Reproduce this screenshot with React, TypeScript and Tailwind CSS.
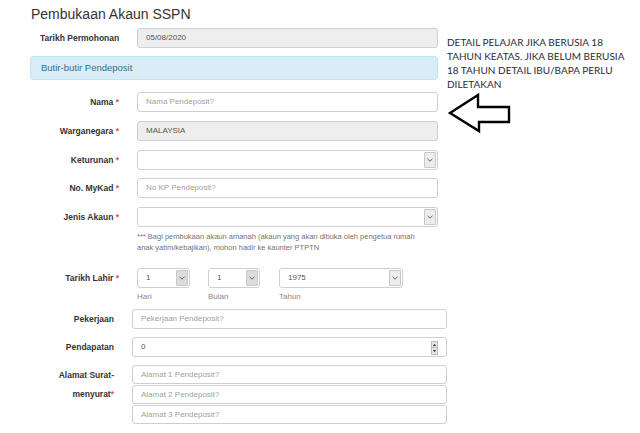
const sans = "font-['Liberation_Sans',Arial,sans-serif]"

function Caret({ dark }: { dark?: boolean }) {
    return (
        <span
            className={`absolute right-[1px] top-[1px] bottom-[1px] w-[12px] flex items-center justify-center border border-[#c8c8c8] rounded-[1px] ${dark ? 'bg-[#dcdcdc]' : 'bg-[#ececec]'}`}
        >
            <svg width="6" height="4" viewBox="0 0 6 4">
                <path d="M0.5 0.8 L3 3.2 L5.5 0.8" fill="none" stroke="#555" strokeWidth="0.9" />
            </svg>
        </span>
    )
}

function Box({
    value,
    placeholder,
    disabled,
    select,
    dark,
    spinner,
    className = '',
}: {
    value?: string
    placeholder?: string
    disabled?: boolean
    select?: boolean
    dark?: boolean
    spinner?: boolean
    className?: string
}) {
    return (
        <div
            className={`relative h-[20px] flex items-center border border-[#cfcfcf] rounded-[3px] px-[8px] text-[8px] ${disabled ? 'bg-[#eeeeee]' : 'bg-white'} ${className}`}
        >
            {value ? (
                <span className="text-[#555]">{value}</span>
            ) : (
                <span className="text-[#a0a0a0]">{placeholder}</span>
            )}
            {select && <Caret dark={dark} />}
            {spinner && (
                <span className="absolute right-[8px] top-[3px] flex flex-col">
                    <span className="w-[7px] h-[7px] bg-[#e4e4e4] border border-[#bbb] flex items-center justify-center">
                        <svg width="3" height="2" viewBox="0 0 3 2"><path d="M0 2 L1.5 0 L3 2 Z" fill="#222" /></svg>
                    </span>
                    <span className="w-[7px] h-[7px] bg-[#e4e4e4] border border-[#bbb] border-t-0 flex items-center justify-center">
                        <svg width="3" height="2" viewBox="0 0 3 2"><path d="M0 0 L1.5 2 L3 0 Z" fill="#222" /></svg>
                    </span>
                </span>
            )}
        </div>
    )
}

function Label({ text, required, wide = true }: { text: string; required?: boolean; wide?: boolean }) {
    return (
        <div className={`${wide ? 'w-[107px]' : 'w-[102px]'} shrink-0 pr-[18px] text-right text-[8.5px] font-bold text-[#333]`}>
            {text}
            {required && <span className="text-[#d9534f]"> *</span>}
        </div>
    )
}

export default function App() {
    return (
        <div className={`w-[640px] h-[433px] overflow-hidden bg-white flex ${sans} text-[#333]`}>
            {/* form */}
            <div className="w-[447px] shrink-0 pl-[30px] pt-[4px] flex flex-col">
                <h1 className="text-[14px] leading-[20px] font-normal text-[#333] pl-[1px]">Pembukaan Akaun SSPN</h1>

                <div className="mt-[4px] flex items-center">
                    <div className="w-[107px] shrink-0 pl-[10px] text-[8.5px] font-bold">Tarikh Permohonan</div>
                    <Box value="05/08/2020" disabled className="w-[301px]" />
                </div>

                <div className="mt-[8px] w-[408px] h-[24px] flex items-center px-[10px] bg-[#d9edf7] border border-[#bce8f1] rounded-[3px] text-[9.5px] text-[#31708f]">
                    Butir-butir Pendeposit
                </div>

                <div className="mt-[12px] flex items-center">
                    <Label text="Nama" required />
                    <Box placeholder="Nama Pendeposit?" className="w-[301px]" />
                </div>
                <div className="mt-[9px] flex items-center">
                    <Label text="Warganegara" required />
                    <Box value="MALAYSIA" disabled className="w-[301px]" />
                </div>
                <div className="mt-[9px] flex items-center">
                    <Label text="Keturunan" required />
                    <Box select className="w-[301px]" />
                </div>
                <div className="mt-[8px] flex items-center">
                    <Label text="No. MyKad" required />
                    <Box placeholder="No KP Pendeposit?" className="w-[301px]" />
                </div>
                <div className="mt-[9px] flex items-center">
                    <Label text="Jenis Akaun" required />
                    <Box select className="w-[301px]" />
                </div>
                <div className="mt-[4px] pl-[107px] text-[7.5px] leading-[11px] text-[#737373]">
                    *** Bagi pembukaan akaun amanah (akaun yang akan dibuka oleh pengetua rumah
                    <br />
                    anak yatim/kebajikan), mohon hadir ke kaunter PTPTN
                </div>

                <div className="mt-[15px] flex items-center">
                    <Label text="Tarikh Lahir" required />
                    <Box value="1" select dark className="w-[53px]" />
                    <Box value="1" select dark className="w-[52px] ml-[18px]" />
                    <Box value="1975" select className="w-[124px] ml-[19px]" />
                </div>
                <div className="mt-[3px] flex text-[8px] leading-[12px] text-[#888]">
                    <span className="w-[107px]" />
                    <span className="w-[71px]">Hari</span>
                    <span className="w-[71px]">Bulan</span>
                    <span>Tahun</span>
                </div>

                <div className="mt-[6px] flex items-center">
                    <Label text="Pekerjaan" wide={false} />
                    <Box placeholder="Pekerjaan Pendeposit?" className="w-[315px]" />
                </div>
                <div className="mt-[8px] flex items-center">
                    <Label text="Pendapatan" wide={false} />
                    <Box value="0" spinner className="w-[315px]" />
                </div>
                <div className="mt-[8px] flex items-start">
                    <div className="w-[102px] shrink-0 pr-[18px] pt-[1px] text-right text-[8.5px] leading-[19px] font-bold">
                        Alamat Surat-
                        <br />
                        menyurat<span className="text-[#d9534f]">*</span>
                    </div>
                    <div className="flex flex-col gap-[1px]">
                        <Box placeholder="Alamat 1 Pendeposit?" className="w-[315px] !h-[19px]" />
                        <Box placeholder="Alamat 2 Pendeposit?" className="w-[315px] !h-[19px]" />
                        <Box placeholder="Alamat 3 Pendeposit?" className="w-[315px] !h-[19px]" />
                    </div>
                </div>
            </div>

            {/* note */}
            <div className="pt-[35px] flex flex-col">
                <p className="font-['Lato','Open_Sans',sans-serif] text-[10px] leading-[14px] text-[#2d2a3a] whitespace-nowrap">
                    DETAIL PELAJAR JIKA BERUSIA 18
                    <br />
                    TAHUN KEATAS. JIKA BELUM BERUSIA
                    <br />
                    18 TAHUN DETAIL IBU/BAPA PERLU
                    <br />
                    DILETAKAN
                </p>
                <svg className="mt-[2px]" width="66" height="42" viewBox="0 0 66 42">
                    <polygon
                        points="3,20 31,2 31,14 62,14 62,29 32,29 32,38"
                        fill="none"
                        stroke="#000"
                        strokeWidth="2.4"
                        strokeLinejoin="miter"
                    />
                </svg>
            </div>
        </div>
    )
}
